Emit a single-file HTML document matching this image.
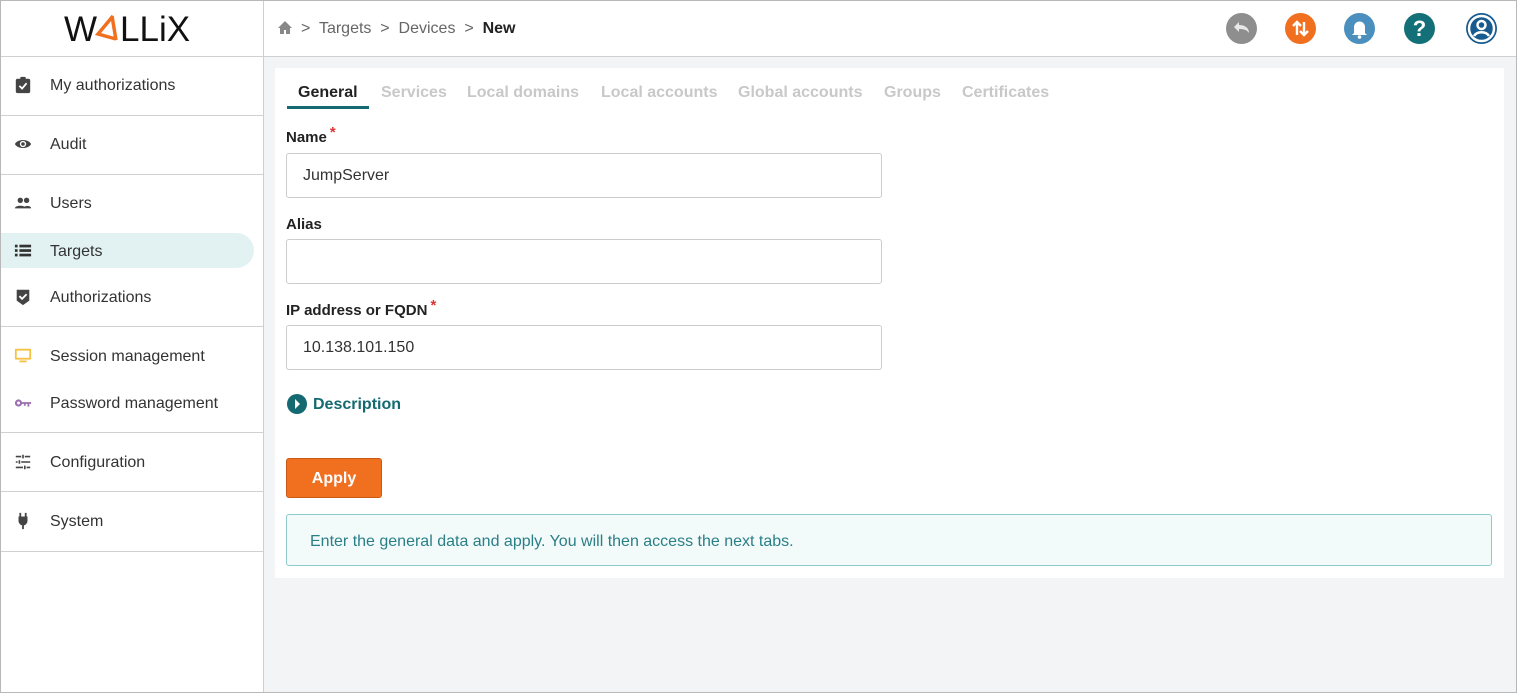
<!DOCTYPE html>
<html><head><style>
*{box-sizing:border-box;margin:0;padding:0}
body{width:1517px;height:693px;overflow:hidden;font-family:"Liberation Sans",sans-serif;background:#f3f4f6;position:relative;color:#333}
.frame{position:absolute;inset:0;border:1px solid #b8b8b8;pointer-events:none;z-index:9}
.side{position:absolute;left:0;top:0;width:264px;height:693px;background:#fff;border-right:1px solid #cfcfcf}
.logo{position:absolute;left:64px;top:12px;font-size:35px;color:#111;line-height:36px;white-space:nowrap}
.hr{position:absolute;left:0;width:263px;border-top:1px solid #d0d0d0}
.it{position:absolute;left:0;width:263px;height:34px;display:flex;align-items:center;font-size:16px;color:#333}
.it .ic{position:absolute;left:13px;top:8px;width:20px;height:18px}
.it span{position:absolute;left:50px;top:9px}
.hdr{position:absolute;left:264px;top:0;right:0;height:57px;background:#fff;border-bottom:1px solid #d0d0d0}
.bc{position:absolute;left:277px;top:20px;font-size:16px;color:#666}
.circ{position:absolute;top:13px;width:31px;height:31px;border-radius:50%}
.card{position:absolute;left:275px;top:68px;width:1229px;height:510px;background:#fff}
.tab{position:absolute;top:84px;font-size:16px;font-weight:bold;color:#c8c8c8}
.lbl{position:absolute;left:286px;font-size:15px;font-weight:bold;color:#222}
.lbl i{color:#d33;font-style:normal;position:relative;top:-5px;margin-left:3px}
.inp{position:absolute;left:286px;width:596px;height:45px;border:1px solid #ccc;border-radius:3px;font-size:16px;padding:13px 16px;color:#333}
</style></head><body>
<div class="side"></div>
<div style="position:absolute;left:0;top:56px;width:263px;border-top:1px solid #d0d0d0"></div>
<div class="logo"><span>W</span><svg width="26" height="28" viewBox="0 0 26 28" style="vertical-align:-1px;margin:0 -1px 0 -2px"><path d="M18 2L3 20l18 5" fill="none" stroke="#f07020" stroke-width="3.5"/><path d="M17 2l4 24" stroke="#f07020" stroke-width="3.5"/></svg><span>LLiX</span></div>
<div class="hr" style="top:115px"></div><div class="hr" style="top:174px"></div><div class="hr" style="top:326px"></div><div class="hr" style="top:432px"></div><div class="hr" style="top:491px"></div><div class="hr" style="top:551px"></div>
<div style="position:absolute;left:0;top:233px;width:254px;height:35px;background:#e2f2f3;border-radius:0 18px 18px 0"></div>
<div class="it" style="top:68px"><svg class="ic" viewBox="0 0 20 20"><rect x="2" y="3" width="16" height="16" rx="2" fill="#444"/><rect x="7" y="1" width="6" height="4" rx="1" fill="#444"/><path d="M6 11l3 3 5-6" stroke="#fff" stroke-width="2" fill="none"/></svg><span>My authorizations</span></div>
<div class="it" style="top:127px"><svg class="ic" viewBox="0 0 20 20"><path d="M1 10C4 4 16 4 19 10 16 16 4 16 1 10z" fill="#444"/><circle cx="10" cy="10" r="3.5" fill="#fff"/><circle cx="10" cy="10" r="2" fill="#444"/></svg><span>Audit</span></div>
<div class="it" style="top:186px"><svg class="ic" viewBox="0 0 20 20"><circle cx="7" cy="7" r="3" fill="#444"/><circle cx="14" cy="7" r="3" fill="#444"/><path d="M1 16c0-4 12-4 12 0zM10 16c0-3 9-4 9 0z" fill="#444"/></svg><span>Users</span></div>
<div class="it" style="top:234px"><svg class="ic" viewBox="0 0 20 20" fill="#333"><rect x="1" y="3" width="3" height="3"/><rect x="6" y="3" width="13" height="3"/><rect x="1" y="8" width="3" height="3"/><rect x="6" y="8" width="13" height="3"/><rect x="1" y="13" width="3" height="3"/><rect x="6" y="13" width="13" height="3"/></svg><span>Targets</span></div>
<div class="it" style="top:280px"><svg class="ic" viewBox="0 0 20 20"><path d="M3 2h14v12l-7 5-7-5z" fill="#444"/><path d="M6 9l3 3 5-5" stroke="#fff" stroke-width="2" fill="none"/></svg><span>Authorizations</span></div>
<div class="it" style="top:339px"><svg class="ic" viewBox="0 0 20 20"><rect x="1" y="2" width="18" height="12" rx="1" fill="#f5c242"/><rect x="3" y="4" width="14" height="8" fill="#fff"/><rect x="6" y="15" width="8" height="2" fill="#f5c242"/></svg><span>Session management</span></div>
<div class="it" style="top:386px"><svg class="ic" viewBox="0 0 20 20"><circle cx="5" cy="10" r="4" fill="#9b6fb0"/><circle cx="5" cy="10" r="1.6" fill="#fff"/><path d="M8 9h11v2h-2v3h-2v-3h-2v2h-2v-2H8z" fill="#9b6fb0"/></svg><span>Password management</span></div>
<div class="it" style="top:445px"><svg class="ic" viewBox="0 0 20 20" stroke="#444" stroke-width="1.8"><path d="M2 4h6M12 4h6M10 2v4M2 10h2M8 10h10M6 8v4M2 16h8M14 16h4M12 14v4"/></svg><span>Configuration</span></div>
<div class="it" style="top:504px"><svg class="ic" viewBox="0 0 20 20"><path d="M7 1v4M13 1v4" stroke="#444" stroke-width="2"/><path d="M5 5h10v5a5 5 0 0 1-10 0z" fill="#444"/><rect x="9" y="14" width="2" height="5" fill="#444"/></svg><span>System</span></div>

<div class="hdr"></div>
<svg style="position:absolute;left:277px;top:20px" width="16" height="15" viewBox="0 0 16 15"><path d="M8 1L1 8h2v6h4v-4h2v4h4V8h2z" fill="#888"/></svg>
<div class="bc" style="left:301px">&gt;&nbsp; Targets &nbsp;&gt;&nbsp; Devices &nbsp;&gt;&nbsp; <b style="color:#222">New</b></div>
<div class="circ" style="left:1226px;background:#8e8e8e"><svg width="31" height="31" viewBox="0 0 31 31"><path d="M8 14l5-5v3c6 0 10 3 10 8-2-3-5-4-10-4v3z" fill="#e8e8e8"/></svg></div>
<div class="circ" style="left:1285px;background:#f07020"><svg width="31" height="31" viewBox="0 0 31 31" stroke="#fff" stroke-width="2.4" fill="none"><path d="M12 22V9M8 13l4-4 4 4M19 9v13M15 18l4 4 4-4"/></svg></div>
<div class="circ" style="left:1344px;background:#4a8fbd"><svg width="31" height="31" viewBox="0 0 31 31"><path d="M10 20v-6a5.5 5.5 0 0 1 11 0v6l2 2H8z" fill="#fff"/><circle cx="15.5" cy="24" r="1.8" fill="#fff"/></svg></div>
<div class="circ" style="left:1404px;background:#147078;color:#fff;font-weight:bold;font-size:22px;text-align:center;line-height:31px">?</div>
<div class="circ" style="left:1466px;background:#175b8f"><svg width="31" height="31" viewBox="0 0 31 31"><circle cx="15.5" cy="15.5" r="12.5" fill="none" stroke="#fff" stroke-width="2.5"/><circle cx="15.5" cy="12" r="4" fill="none" stroke="#fff" stroke-width="2.5"/><path d="M8 23c3-5 12-5 15 0" fill="none" stroke="#fff" stroke-width="2.5"/></svg></div>

<div class="card"></div>
<div class="tab" style="left:298px;color:#222">General</div>
<div style="position:absolute;left:287px;top:106px;width:82px;height:3px;background:#146a70"></div>
<div class="tab" style="left:381px">Services</div>
<div class="tab" style="left:467px">Local domains</div>
<div class="tab" style="left:601px">Local accounts</div>
<div class="tab" style="left:738px">Global accounts</div>
<div class="tab" style="left:884px">Groups</div>
<div class="tab" style="left:962px">Certificates</div>

<div class="lbl" style="top:129px">Name<i>*</i></div>
<div class="inp" style="top:153px">JumpServer</div>
<div class="lbl" style="top:216px">Alias</div>
<div class="inp" style="top:239px"></div>
<div class="lbl" style="top:302px">IP address or FQDN<i>*</i></div>
<div class="inp" style="top:325px">10.138.101.150</div>
<svg style="position:absolute;left:286px;top:393px" width="22" height="22" viewBox="0 0 22 22"><circle cx="11" cy="11" r="10" fill="#146a70"/><path d="M9 6l5 5-5 5z" fill="#fff"/></svg>
<div style="position:absolute;left:313px;top:396px;font-size:16px;font-weight:bold;color:#146a70">Description</div>
<div style="position:absolute;left:286px;top:458px;width:96px;height:40px;background:#f07020;border:1px solid #c95a15;border-radius:3px;color:#fff;font-weight:bold;font-size:16px;text-align:center;line-height:40px">Apply</div>
<div style="position:absolute;left:286px;top:514px;width:1206px;height:52px;background:#f3fafa;border:1px solid #8fc9c9;border-radius:3px;color:#2a7f86;font-size:16px;padding:18px 23px">Enter the general data and apply. You will then access the next tabs.</div>
<div class="frame"></div>
</body></html>
